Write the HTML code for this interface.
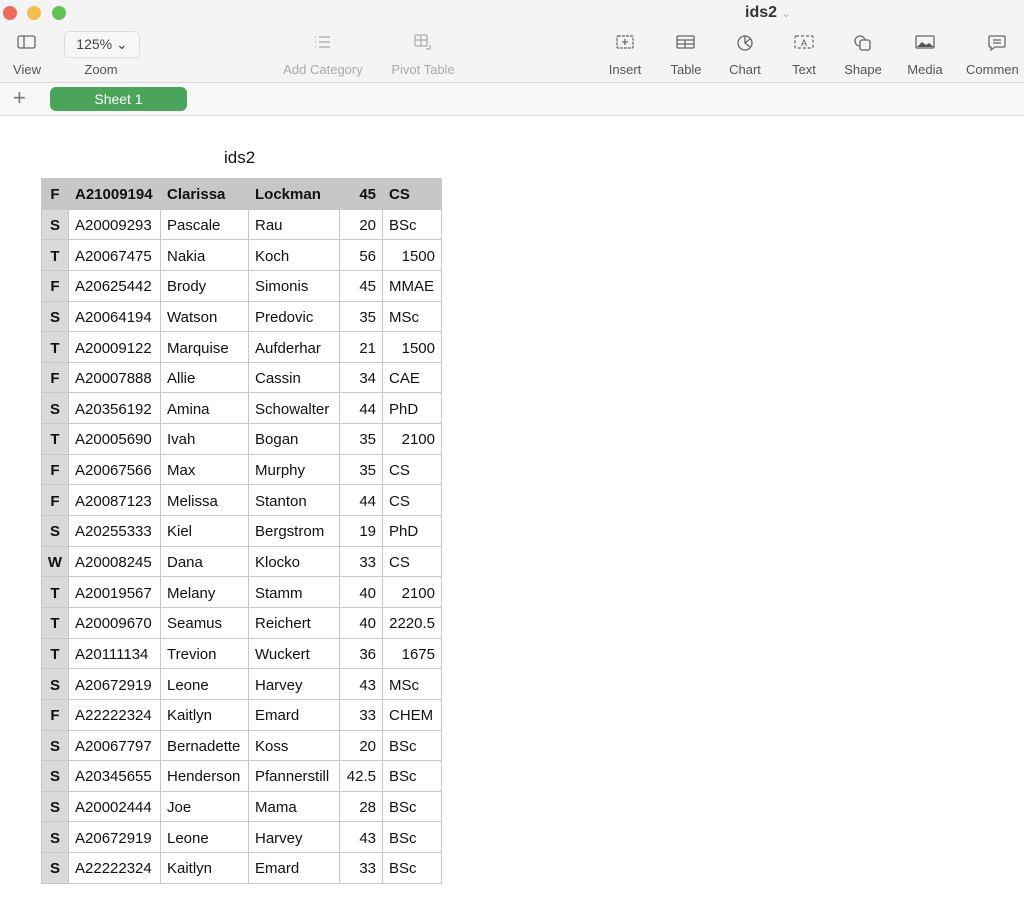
<!DOCTYPE html><html><head><style>
body{margin:0;width:1024px;height:909px;background:#fff;font-family:"Liberation Sans",Arial,sans-serif;position:relative;overflow:hidden}
.tb{position:absolute;left:0;top:0;width:1024px;height:82px;background:#f4f4f5;border-bottom:1px solid #dcdcdc}
.tabs{position:absolute;left:0;top:83px;width:1024px;height:32px;background:#f7f7f8;border-bottom:1px solid #dedede}
.dot{position:absolute;top:6px;width:14px;height:14px;border-radius:50%}
.lbl{position:absolute;top:62px;font-size:13px;color:#555;text-align:center;transform:translateX(-50%);white-space:nowrap}
.dim{color:#aaa}
.ic{position:absolute;top:34px;transform:translateX(-50%)}
table{position:absolute;left:41px;top:178px;border-collapse:collapse;font-size:15px;color:#111;table-layout:fixed;width:400px}
td{border:1px solid #c8c8c8;height:30.65px;padding:2px 6px 0;white-space:nowrap;overflow:hidden;box-sizing:border-box}
td:first-child{background:#d9d9d9;font-weight:bold;text-align:center;padding:2px 0 0}
tr:first-child td{background:#c6c7c6;font-weight:bold}
td.r{text-align:right}
</style></head><body>
<div class="tb">
<div class="dot" style="left:3px;background:#ec6a5e"></div>
<div class="dot" style="left:27px;background:#f4bf4f"></div>
<div class="dot" style="left:52px;background:#61c554"></div>
<div style="position:absolute;left:745px;top:4px;font-size:16px;font-weight:bold;color:#333">ids2 <span style="font-weight:normal;color:#aaa;font-size:11px">⌄</span></div>
<svg class="ic" style="left:27px" width="20" height="16"><rect x="1" y="2" width="17" height="12" rx="2" fill="none" stroke="#666" stroke-width="1.3"/><line x1="7" y1="2" x2="7" y2="14" stroke="#666" stroke-width="1.3"/></svg>
<div style="position:absolute;left:64px;top:31px;width:74px;height:25px;border:1px solid #ddd;border-radius:5px;background:#f7f7f7;font-size:14px;color:#444;line-height:25px;text-align:center">125% ⌄</div>
<svg class="ic" style="left:323px" width="20" height="16"><g stroke="#aaa" stroke-width="1.3"><line x1="2" y1="3" x2="3" y2="3"/><line x1="6" y1="3" x2="17" y2="3"/><line x1="2" y1="8" x2="3" y2="8"/><line x1="6" y1="8" x2="17" y2="8"/><line x1="2" y1="13" x2="3" y2="13"/><line x1="6" y1="13" x2="17" y2="13"/></g></svg>
<svg class="ic" style="left:423px" width="20" height="18"><g stroke="#aaa" stroke-width="1.2" fill="none"><rect x="2" y="1" width="12" height="11" rx="1"/><line x1="2" y1="6" x2="14" y2="6"/><line x1="8" y1="1" x2="8" y2="12"/><path d="M17 11v4h-4"/></g></svg>
<svg class="ic" style="left:625px" width="20" height="16"><g stroke="#666" stroke-width="1.2" fill="none"><rect x="2" y="2" width="16" height="12" rx="1" stroke-dasharray="3 1"/><line x1="10" y1="5" x2="10" y2="11"/><line x1="7" y1="8" x2="13" y2="8"/></g></svg>
<svg class="ic" style="left:686px" width="20" height="16"><g stroke="#666" stroke-width="1.3" fill="none"><rect x="1" y="2" width="17" height="12" rx="1"/><line x1="1" y1="6" x2="18" y2="6"/><line x1="1" y1="10" x2="18" y2="10"/><line x1="9" y1="6" x2="9" y2="14"/></g></svg>
<svg class="ic" style="left:745px" width="20" height="18"><g stroke="#666" stroke-width="1.3" fill="none"><circle cx="10" cy="9" r="7"/><path d="M10 2v7l5 4M10 9l5-4"/></g></svg>
<svg class="ic" style="left:804px" width="20" height="16"><g stroke="#666" stroke-width="1.2" fill="none"><rect x="1" y="2" width="18" height="12" rx="1" stroke-dasharray="3 2"/></g><text x="10" y="12" font-size="9" text-anchor="middle" fill="#555" font-family="Liberation Sans">A</text></svg>
<svg class="ic" style="left:863px" width="20" height="18"><g stroke="#666" stroke-width="1.3" fill="none"><circle cx="7" cy="7" r="5"/><rect x="7" y="6" width="10" height="10" rx="2" fill="#f4f4f5"/></g></svg>
<svg class="ic" style="left:925px" width="20" height="16"><rect x="1" y="2" width="18" height="12" rx="1" fill="none" stroke="#666" stroke-width="1.3"/><path d="M2 13l5-5 4 3 3-2 5 4z" fill="#555"/></svg>
<svg class="ic" style="left:997px" width="20" height="18"><g stroke="#666" stroke-width="1.3" fill="none"><path d="M3 2h14a1 1 0 011 1v9a1 1 0 01-1 1H8l-4 3v-3H3a1 1 0 01-1-1V3a1 1 0 011-1z"/><line x1="6" y1="6" x2="14" y2="6"/><line x1="6" y1="9" x2="14" y2="9"/></g></svg>
<div class="lbl" style="left:27px">View</div>
<div class="lbl" style="left:101px">Zoom</div>
<div class="lbl dim" style="left:323px">Add Category</div>
<div class="lbl dim" style="left:423px">Pivot Table</div>
<div class="lbl" style="left:625px">Insert</div>
<div class="lbl" style="left:686px">Table</div>
<div class="lbl" style="left:745px">Chart</div>
<div class="lbl" style="left:804px">Text</div>
<div class="lbl" style="left:863px">Shape</div>
<div class="lbl" style="left:925px">Media</div>
<div class="lbl" style="left:966px;transform:none">Commen</div>
</div>
<div class="tabs">
<div style="position:absolute;left:13px;top:2px;font-size:22px;color:#777;font-weight:300">+</div>
<div style="position:absolute;left:50px;top:4px;width:137px;height:24px;border-radius:6px;background:#4aa55a;color:#fff;font-size:14px;line-height:24px;text-align:center">Sheet 1</div>
</div>
<div style="position:absolute;left:224px;top:148px;font-size:17px;color:#111">ids2</div>
<table>
<colgroup><col style="width:27px"><col style="width:92px"><col style="width:88px"><col style="width:91px"><col style="width:43px"><col style="width:59px"></colgroup>
<tr><td>F</td><td>A21009194</td><td>Clarissa</td><td>Lockman</td><td class="r">45</td><td>CS</td></tr>
<tr><td>S</td><td>A20009293</td><td>Pascale</td><td>Rau</td><td class="r">20</td><td>BSc</td></tr>
<tr><td>T</td><td>A20067475</td><td>Nakia</td><td>Koch</td><td class="r">56</td><td class="r">1500</td></tr>
<tr><td>F</td><td>A20625442</td><td>Brody</td><td>Simonis</td><td class="r">45</td><td>MMAE</td></tr>
<tr><td>S</td><td>A20064194</td><td>Watson</td><td>Predovic</td><td class="r">35</td><td>MSc</td></tr>
<tr><td>T</td><td>A20009122</td><td>Marquise</td><td>Aufderhar</td><td class="r">21</td><td class="r">1500</td></tr>
<tr><td>F</td><td>A20007888</td><td>Allie</td><td>Cassin</td><td class="r">34</td><td>CAE</td></tr>
<tr><td>S</td><td>A20356192</td><td>Amina</td><td>Schowalter</td><td class="r">44</td><td>PhD</td></tr>
<tr><td>T</td><td>A20005690</td><td>Ivah</td><td>Bogan</td><td class="r">35</td><td class="r">2100</td></tr>
<tr><td>F</td><td>A20067566</td><td>Max</td><td>Murphy</td><td class="r">35</td><td>CS</td></tr>
<tr><td>F</td><td>A20087123</td><td>Melissa</td><td>Stanton</td><td class="r">44</td><td>CS</td></tr>
<tr><td>S</td><td>A20255333</td><td>Kiel</td><td>Bergstrom</td><td class="r">19</td><td>PhD</td></tr>
<tr><td>W</td><td>A20008245</td><td>Dana</td><td>Klocko</td><td class="r">33</td><td>CS</td></tr>
<tr><td>T</td><td>A20019567</td><td>Melany</td><td>Stamm</td><td class="r">40</td><td class="r">2100</td></tr>
<tr><td>T</td><td>A20009670</td><td>Seamus</td><td>Reichert</td><td class="r">40</td><td class="r">2220.5</td></tr>
<tr><td>T</td><td>A20111134</td><td>Trevion</td><td>Wuckert</td><td class="r">36</td><td class="r">1675</td></tr>
<tr><td>S</td><td>A20672919</td><td>Leone</td><td>Harvey</td><td class="r">43</td><td>MSc</td></tr>
<tr><td>F</td><td>A22222324</td><td>Kaitlyn</td><td>Emard</td><td class="r">33</td><td>CHEM</td></tr>
<tr><td>S</td><td>A20067797</td><td>Bernadette</td><td>Koss</td><td class="r">20</td><td>BSc</td></tr>
<tr><td>S</td><td>A20345655</td><td>Henderson</td><td>Pfannerstill</td><td class="r">42.5</td><td>BSc</td></tr>
<tr><td>S</td><td>A20002444</td><td>Joe</td><td>Mama</td><td class="r">28</td><td>BSc</td></tr>
<tr><td>S</td><td>A20672919</td><td>Leone</td><td>Harvey</td><td class="r">43</td><td>BSc</td></tr>
<tr><td>S</td><td>A22222324</td><td>Kaitlyn</td><td>Emard</td><td class="r">33</td><td>BSc</td></tr>
</table>
</body></html>
